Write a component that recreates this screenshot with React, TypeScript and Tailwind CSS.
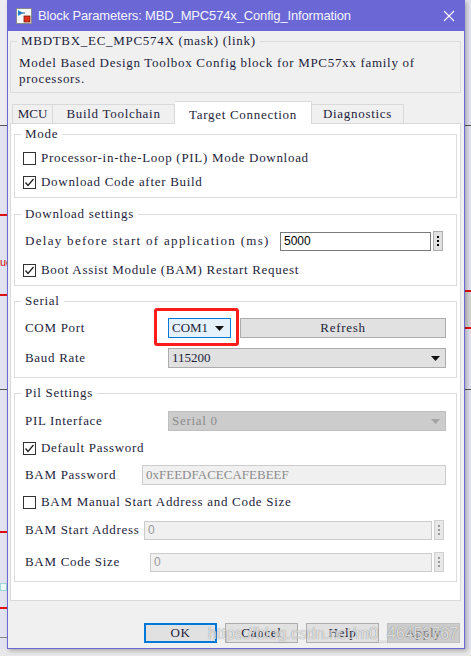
import { ReactNode } from "react";

const sim = "font-['Liberation_Serif',serif] text-[13px] tracking-[0.7px] text-[#1e1e3c]";

function Checkbox({ checked }: { checked?: boolean }) {
  return (
    <span className="flex h-[13px] w-[13px] items-center justify-center border border-[#333333] bg-white">
      {checked && (
        <svg width="11" height="11" viewBox="0 0 11 11">
          <polyline points="1.5,5.5 4,8.5 9.5,2" fill="none" stroke="#222" strokeWidth="1.3" />
        </svg>
      )}
    </span>
  );
}

function CheckRow({ checked, label, className }: { checked?: boolean; label: string; className?: string }) {
  return (
    <div className={`flex h-[22px] items-center pl-[8px] ${className ?? ""}`}>
      <Checkbox checked={checked} />
      <span className={`${sim} ml-[5px]`}>{label}</span>
    </div>
  );
}

function Group({ title, children, className }: { title: string; children: ReactNode; className?: string }) {
  return (
    <fieldset className={`border border-[#dcdcdc] ${className ?? ""}`}>
      <legend className={`${sim} ml-[6px] px-[4px] leading-[16px]`}>{title}</legend>
      {children}
    </fieldset>
  );
}

function Arrow({ color = "#111" }: { color?: string }) {
  return (
    <svg width="9" height="5" viewBox="0 0 9 5">
      <polygon points="0,0 9,0 4.5,5" fill={color} />
    </svg>
  );
}

function Dots({ disabled }: { disabled?: boolean }) {
  return (
    <span
      className={`ml-[2px] flex h-[20px] w-[10px] flex-col items-center justify-center gap-[2px] border ${
        disabled ? "border-[#cfcfcf] bg-[#e8e8e8]" : "border-[#adadad] bg-[#e1e1e1]"
      }`}
    >
      <span className={`h-[2px] w-[2px] ${disabled ? "bg-[#9a9a9a]" : "bg-black"}`} />
      <span className={`h-[2px] w-[2px] ${disabled ? "bg-[#9a9a9a]" : "bg-black"}`} />
      <span className={`h-[2px] w-[2px] ${disabled ? "bg-[#9a9a9a]" : "bg-black"}`} />
    </span>
  );
}

function DialogButton({ label, focused, disabled }: { label: string; focused?: boolean; disabled?: boolean }) {
  return (
    <button
      className={`flex h-[20px] w-[73px] items-center justify-center ${
        focused
          ? "border-2 border-[#0078d7] bg-[#e1e1e1]"
          : disabled
            ? "border border-[#bfbfbf] bg-[#cccccc]"
            : "border border-[#adadad] bg-[#e1e1e1]"
      }`}
    >
      <span className={`${sim} ${disabled ? "text-[#838383]" : ""}`}>{label}</span>
    </button>
  );
}

function TitleIcon() {
  return (
    <svg width="16" height="16" viewBox="0 0 16 16">
      <rect x="0.5" y="0.5" width="15" height="15" fill="#fafafa" stroke="#8a8a8a" />
      <polygon points="2,2 2,8 7,5" fill="#2b8fd6" />
      <line x1="2" y1="5" x2="9" y2="5" stroke="#1a5fa8" strokeWidth="1" />
      <rect x="8" y="8" width="6" height="6" fill="#e0321c" stroke="#7a1a10" strokeWidth="0.8" />
    </svg>
  );
}

export default function App() {
  return (
    <div className="relative h-[656px] w-[471px] overflow-hidden bg-[#e2e2f0]">
      {/* canvas behind the dialog */}
      <div className="absolute left-0 top-0 h-[125px] w-[7px] bg-[#ececf2]" />
      <div className="absolute left-0 top-[125px] h-px w-[471px] bg-[#555555]" />
      <div className="absolute left-0 top-[389px] h-px w-[471px] bg-[#555555]" />
      <div className="absolute left-0 top-[214px] h-[2px] w-[7px] bg-[#e01010]" />
      <div className="absolute left-0 top-[294px] h-[2px] w-[7px] bg-[#e01010]" />
      <div className="absolute left-0 top-[256px] font-['Liberation_Sans',sans-serif] text-[11px] leading-[12px] text-[#d01010]">
        ue
      </div>
      <div className="absolute left-0 top-[531px] h-[2px] w-[7px] bg-[#e01010]" />
      <div className="absolute left-0 top-[583px] h-[8px] w-[7px] border border-[#9ad8d8] bg-[#eef8f8]" />
      <div className="absolute left-0 top-[607px] h-[2px] w-[7px] bg-[#e01010]" />
      <div className="absolute left-0 top-[637px] h-px w-[7px] bg-[#888888]" />
      <div className="absolute left-0 top-[649px] h-[7px] w-[471px] bg-[#e8e8e8]" />
      <div className="absolute right-0 top-[290px] h-[2px] w-[6px] bg-[#e01010]" />
      <div className="absolute right-0 top-[292px] h-[35px] w-[6px] bg-[#d4d4d4]" />
      <div className="absolute right-0 top-[327px] h-[2px] w-[6px] bg-[#e01010]" />

      {/* dialog window */}
      <div className="absolute left-[7px] top-0 flex h-[649px] w-[458px] flex-col border border-t-0 border-[#6b68d6] bg-[#f0f0f0] shadow-[2px_2px_4px_rgba(0,0,0,0.25)]">
        <div className="-mx-px flex h-[31px] items-center bg-[#6b68d6] pl-[9px] pr-[10px]">
          <TitleIcon />
          <span className="ml-[6px] mt-px font-['Liberation_Sans',sans-serif] text-[13px] tracking-[-0.15px] text-[#f4f4ff]">
            Block Parameters: MBD_MPC574x_Config_Information
          </span>
          <svg className="ml-auto" width="12" height="12" viewBox="0 0 12 12">
            <path d="M1 1 L11 11 M11 1 L1 11" stroke="#ffffff" strokeWidth="1.2" />
          </svg>
        </div>

        <div className="flex flex-1 flex-col pl-[2px] pr-[3px]">
          <fieldset className="mt-[2px] border border-[#dcdcdc] pb-[5px] pt-[6px]">
            <legend className={`${sim} ml-[6px] px-[4px] leading-[16px] tracking-[-0.4px]`}>
              MBDTBX_EC_MPC574X (mask) (link)
            </legend>
            <p className={`${sim} pl-[8px] leading-[16px]`}>
              Model Based Design Toolbox Config block for MPC57xx family of
              <br />
              processors.
            </p>
          </fieldset>

          <div className="mt-[8px] flex h-[22px] items-end pl-[2px]">
            <div className="flex h-[19px] w-[41px] items-center justify-center border border-b-0 border-[#d9d9d9]">
              <span className={`${sim} tracking-[0px]`}>MCU</span>
            </div>
            <div className="flex h-[19px] w-[122px] items-center justify-center border border-b-0 border-l-0 border-[#d9d9d9]">
              <span className={sim}>Build Toolchain</span>
            </div>
            <div className="relative z-10 -mb-px flex h-[23px] w-[137px] items-start justify-center border border-b-0 border-l-0 border-[#d9d9d9] bg-white pt-[3px]">
              <span className={sim}>Target Connection</span>
            </div>
            <div className="flex h-[19px] w-[92px] items-center justify-center border border-b-0 border-l-0 border-[#d9d9d9]">
              <span className={sim}>Diagnostics</span>
            </div>
          </div>

          <div className="h-[478px] border border-[#d9d9d9] bg-white px-[3px] pt-[2px]">
            <Group title="Mode" className="pb-[3px] pt-[4px]">
              <CheckRow label="Processor-in-the-Loop (PIL) Mode Download" className="h-[24px]" />
              <CheckRow checked label="Download Code after Build" className="h-[24px]" />
            </Group>

            <Group title="Download settings" className="mt-[8px] pb-[3px] pt-[7px]">
              <div className="flex h-[24px] items-center pl-[10px]">
                <span className={`${sim} w-[255px] tracking-[1.3px]`}>Delay before start of application (ms)</span>
                <span className="flex h-[19px] w-[151px] items-center border border-[#7a7a7a] bg-white pl-[3px] font-['Liberation_Sans',sans-serif] text-[12px] text-black">
                  5000
                </span>
                <Dots />
              </div>
              <CheckRow checked label="Boot Assist Module (BAM) Restart Request" className="mt-[5px] h-[24px]" />
            </Group>

            <Group title="Serial" className="mt-[7px] pb-[8px] pt-[8px]">
              <div className="flex h-[22px] items-center pl-[10px] pr-[10px]">
                <span className={`${sim} w-[143px]`}>COM Port</span>
                <div className="relative">
                  <span className="flex h-[20px] w-[63px] items-center justify-between border border-[#0078d7] bg-[#e5f1fb] pl-[3px] pr-[6px]">
                    <span className={`${sim} tracking-[0px]`}>COM1</span>
                    <Arrow />
                  </span>
                  <span className="absolute -bottom-[8px] -left-[14px] -right-[8px] -top-[10px] rounded-[3px] border-[3px] border-[#fe1d1d]" />
                </div>
                <span className="ml-[9px] flex h-[20px] flex-1 items-center justify-center border border-[#adadad] bg-[#e1e1e1]">
                  <span className={sim}>Refresh</span>
                </span>
              </div>
              <div className="mt-[8px] flex h-[22px] items-center pl-[10px] pr-[10px]">
                <span className={`${sim} w-[143px]`}>Baud Rate</span>
                <span className="flex h-[20px] flex-1 items-center justify-between border border-[#adadad] bg-[#e1e1e1] pl-[3px] pr-[5px]">
                  <span className={`${sim} tracking-[0px]`}>115200</span>
                  <Arrow />
                </span>
              </div>
            </Group>

            <Group title="Pil Settings" className="mt-[7px] pb-[8px] pt-[9px]">
              <div className="flex h-[22px] items-center pl-[10px] pr-[10px]">
                <span className={`${sim} w-[143px]`}>PIL Interface</span>
                <span className="flex h-[20px] flex-1 items-center justify-between border border-[#bfbfbf] bg-[#cccccc] pl-[3px] pr-[5px]">
                  <span className={`${sim} text-[#8d8d8d]`}>Serial 0</span>
                  <Arrow color="#a3a3a3" />
                </span>
              </div>
              <CheckRow checked label="Default Password" className="mt-[5px]" />
              <div className="mt-[5px] flex h-[22px] items-center pl-[10px] pr-[10px]">
                <span className={`${sim} w-[117px]`}>BAM Password</span>
                <span className="flex h-[20px] flex-1 items-center border border-[#cccccc] bg-[#f0f0f0] pl-[3px] font-['Liberation_Serif',serif] text-[13px] text-[#8c8c8c]">
                  0xFEEDFACECAFEBEEF
                </span>
              </div>
              <CheckRow label="BAM Manual Start Address and Code Size" className="mt-[5px]" />
              <div className="mt-[6px] flex h-[22px] items-center pl-[10px] pr-[12px]">
                <span className={`${sim} w-[119px]`}>BAM Start Address</span>
                <span className="flex h-[19px] flex-1 items-center border border-[#cccccc] bg-[#f0f0f0] pl-[3px] font-['Liberation_Sans',sans-serif] text-[12px] text-[#9a9a9a]">
                  0
                </span>
                <Dots disabled />
              </div>
              <div className="mt-[10px] flex h-[22px] items-center pl-[10px] pr-[12px]">
                <span className={`${sim} w-[125px]`}>BAM Code Size</span>
                <span className="flex h-[19px] flex-1 items-center border border-[#cccccc] bg-[#f0f0f0] pl-[3px] font-['Liberation_Sans',sans-serif] text-[12px] text-[#9a9a9a]">
                  0
                </span>
                <Dots disabled />
              </div>
            </Group>
          </div>

          <div className="relative mt-[22px] flex justify-end gap-[8px] pr-px">
            <DialogButton label="OK" focused />
            <DialogButton label="Cancel" />
            <DialogButton label="Help" />
            <DialogButton label="Apply" disabled />
            <span className="pointer-events-none absolute right-[3px] top-[1px] font-['Liberation_Sans',sans-serif] text-[16px] leading-[20px] text-white/75 [text-shadow:0_0_1px_rgba(0,0,0,0.5)]">
              https://blog.csdn.net/m0_46453767
            </span>
          </div>
        </div>
      </div>
    </div>
  );
}
